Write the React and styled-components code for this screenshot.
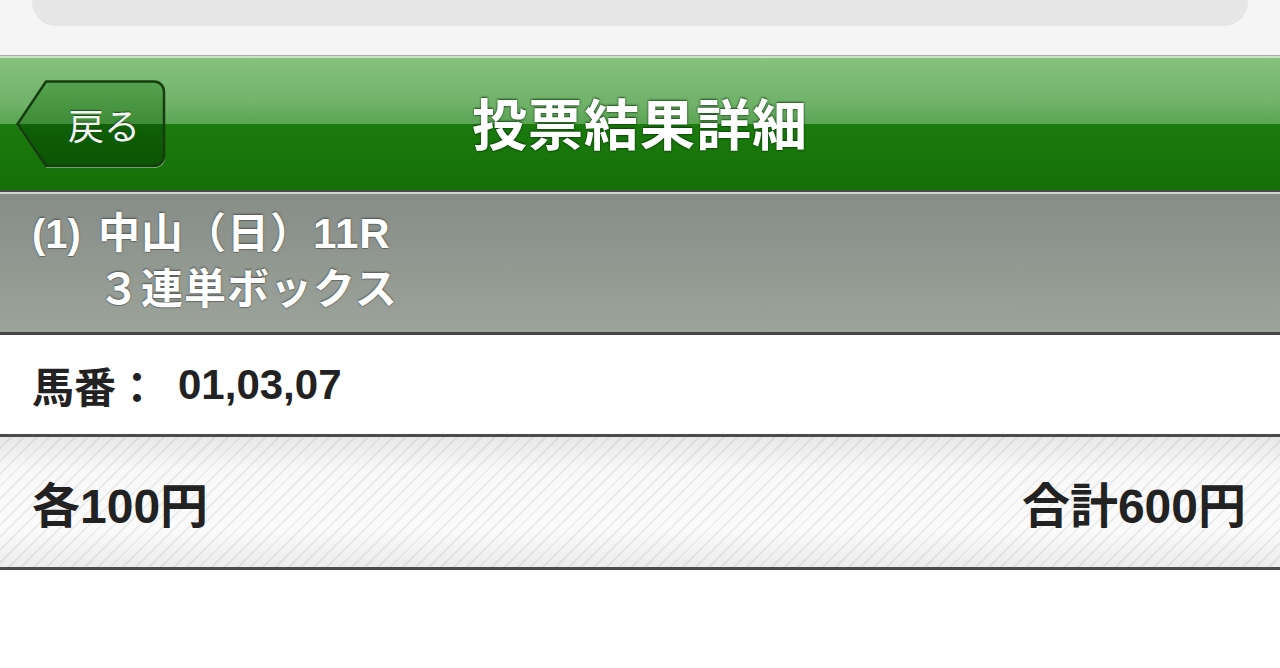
import styled, { createGlobalStyle } from "styled-components";

const GlobalStyle = createGlobalStyle`
  html, body {
    margin: 0;
    padding: 0;
    background: #ffffff;
    font-family: "Liberation Sans", "Noto Sans CJK JP", sans-serif;
  }
`;

const Page = styled.div`
  width: 1280px;
  min-height: 668px;
  background: #ffffff;
`;

const TopArea = styled.div`
  height: 55px;
  background: #f5f5f5;
  padding: 0 32px;
  border-bottom: 1px solid #a6aca6;
`;

const SearchStub = styled.div`
  height: 26px;
  background: #e6e6e6;
  border-radius: 0 0 24px 24px;
`;

const Header = styled.header`
  height: 132px;
  display: grid;
  grid-template-columns: 1fr auto 1fr;
  align-items: center;
  padding: 0 16px;
  border-top: 2px solid #c9e3c5;
  border-bottom: 2px solid #474a47;
  box-shadow: 0 2px 0 #d4d6d4;
  margin-bottom: 2px;
  background: linear-gradient(
    #86c27f 0%,
    #6fb268 35%,
    #5aa554 50%,
    #1b7b0e 50%,
    #157008 100%
  );
`;

const BackButton = styled.button`
  position: relative;
  justify-self: start;
  width: 150px;
  height: 88px;
  padding: 0 0 0 26px;
  border: none;
  background: none;
  font-family: inherit;
  font-size: 36px;
  font-weight: 400;
  color: #f2f4f2;
  text-shadow: 0 -1px 1px rgba(0, 0, 0, 0.5);
  cursor: pointer;

  svg {
    position: absolute;
    inset: 0;
  }

  span {
    position: relative;
  }
`;

const Title = styled.h1`
  margin: 0 0 6px;
  font-size: 55px;
  font-weight: 700;
  color: #ffffff;
  letter-spacing: 1px;
  text-shadow: 0 -1px 2px rgba(0, 40, 0, 0.7), 0 1px 2px rgba(0, 40, 0, 0.5);
`;

const RaceInfo = styled.section`
  display: flex;
  gap: 17px;
  padding: 12px 32px 14px;
  height: 112px;
  background: linear-gradient(#878d87, #9ba39a);
  border-bottom: 3px solid #444644;
  color: #ffffff;
  font-size: 42px;
  font-weight: 700;
  line-height: 56px;
  text-shadow: 0 -1px 2px rgba(0, 0, 0, 0.45), 0 1px 1px rgba(0, 0, 0, 0.3);
`;

const RaceNo = styled.span`
  font-size: 40px;
`;

const RaceLines = styled.div`
  display: flex;
  flex-direction: column;
  letter-spacing: 1px;
`;

const Row = styled.div`
  display: flex;
  align-items: center;
  justify-content: ${(p) => (p.$split ? "space-between" : "flex-start")};
  height: ${(p) => p.$height}px;
  padding: 0 34px 0 32px;
  color: #222222;
  font-weight: 700;
  font-size: ${(p) => p.$size}px;
  border-bottom: 3px solid #4a4c4a;
  background: ${(p) =>
    p.$striped
      ? `repeating-linear-gradient(135deg, transparent 0 7px, rgba(0,0,0,0.055) 7px 9px),
         linear-gradient(#e8e8e8, #f8f8f8 25%, #fbfbfb 70%, #ececec)`
      : "#ffffff"};
`;

const Label = styled.span`
  margin-right: 20px;
`;

export default function App() {
  return (
    <Page>
      <GlobalStyle />
      <TopArea>
        <SearchStub />
      </TopArea>
      <Header>
        <BackButton>
          <svg width="150" height="88" viewBox="0 0 150 88">
            <defs>
              <linearGradient id="backFill" x1="0" y1="0" x2="0" y2="1">
                <stop offset="0" stopColor="#56a34f" />
                <stop offset="0.5" stopColor="#3f8d38" />
                <stop offset="0.5" stopColor="#0f6107" />
                <stop offset="1" stopColor="#0b5405" />
              </linearGradient>
            </defs>
            <path
              d="M31 3 H139 a9 9 0 0 1 9 9 V78 a9 9 0 0 1 -9 9 H31 L2 45 Z"
              fill="none"
              stroke="#8fc889"
              strokeWidth="2"
            />
            <path
              d="M30 1.5 H138 a10 10 0 0 1 10 10 V76 a10 10 0 0 1 -10 10 H30 L1.5 44 Z"
              fill="url(#backFill)"
              stroke="#173c10"
              strokeWidth="2.5"
            />
          </svg>
          <span>戻る</span>
        </BackButton>
        <Title>投票結果詳細</Title>
        <div />
      </Header>
      <RaceInfo>
        <RaceNo>(1)</RaceNo>
        <RaceLines>
          <span>中山（日）11R</span>
          <span>３連単ボックス</span>
        </RaceLines>
      </RaceInfo>
      <Row $height={99} $size={42}>
        <Label>馬番：</Label>
        <span>01,03,07</span>
      </Row>
      <Row $height={130} $size={48} $striped $split>
        <span>各100円</span>
        <span>合計600円</span>
      </Row>
    </Page>
  );
}
